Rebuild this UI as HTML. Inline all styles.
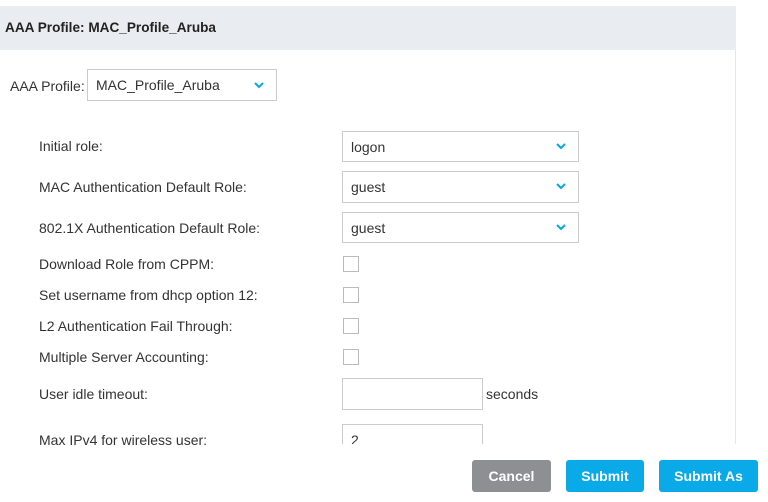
<!DOCTYPE html>
<html><head><style>
*{margin:0;padding:0;box-sizing:border-box}
body{width:768px;height:502px;background:#fff;font-family:"Liberation Sans",sans-serif;color:#333;position:relative;overflow:hidden;font-size:14px}
.a{position:absolute}
.hdr{left:0;top:6px;width:736px;height:44px;background:#e9ecf0;font-weight:bold;font-size:13.6px;color:#222;padding:14px 0 0 5px}
.vl{left:735px;top:50px;width:1px;height:394px;background:#e6e6e6}
.lbl{left:39px;line-height:16px}
.sel{border:1px solid #ccc;background:#fff;padding-left:8px;line-height:30px}
.sel svg{position:absolute;right:12px;top:11px}
.cb{left:343px;width:16px;height:16px;border:1px solid #bbb;background:#fff}
.btn{top:460px;height:32px;border-radius:3px;color:#fff;font-weight:bold;font-size:14px;text-align:center;line-height:32px}
</style></head><body>
<div class="a hdr">AAA Profile: MAC_Profile_Aruba</div>
<div class="a vl"></div>
<div class="a" style="left:10px;top:78px">AAA Profile:</div>
<div class="a sel" style="left:87px;top:69px;width:190px;height:32px;line-height:30px">MAC_Profile_Aruba<svg width="10" height="7" viewBox="0 0 10 7" style="top:12px"><path d="M1 1l4 4 4-4" fill="none" stroke="#0aa5e6" stroke-width="2"/></svg></div>

<div class="a lbl" style="top:138px">Initial role:</div>
<div class="a lbl" style="top:179px">MAC Authentication Default Role:</div>
<div class="a lbl" style="top:220px">802.1X Authentication Default Role:</div>
<div class="a lbl" style="top:256px">Download Role from CPPM:</div>
<div class="a lbl" style="top:287px">Set username from dhcp option 12:</div>
<div class="a lbl" style="top:318px">L2 Authentication Fail Through:</div>
<div class="a lbl" style="top:349px">Multiple Server Accounting:</div>
<div class="a lbl" style="top:386px">User idle timeout:</div>
<div class="a lbl" style="top:432px">Max IPv4 for wireless user:</div>

<div class="a sel" style="left:342px;top:131px;width:237px;height:31px">logon<svg width="10" height="7" viewBox="0 0 10 7"><path d="M1 1l4 4 4-4" fill="none" stroke="#0aa5e6" stroke-width="2"/></svg></div>
<div class="a sel" style="left:342px;top:171px;width:237px;height:32px">guest<svg width="10" height="7" viewBox="0 0 10 7"><path d="M1 1l4 4 4-4" fill="none" stroke="#0aa5e6" stroke-width="2"/></svg></div>
<div class="a sel" style="left:342px;top:212px;width:237px;height:31px">guest<svg width="10" height="7" viewBox="0 0 10 7"><path d="M1 1l4 4 4-4" fill="none" stroke="#0aa5e6" stroke-width="2"/></svg></div>

<div class="a cb" style="top:256px"></div>
<div class="a cb" style="top:287px"></div>
<div class="a cb" style="top:318px"></div>
<div class="a cb" style="top:349px"></div>

<div class="a" style="left:342px;top:378px;width:141px;height:32px;border:1px solid #ccc"></div>
<div class="a" style="left:486px;top:386px">seconds</div>
<div class="a" style="left:342px;top:424px;width:141px;height:20px;border:1px solid #ccc;border-bottom:none;padding:7px 0 0 8px;line-height:16px;overflow:hidden">2</div>

<div class="a btn" style="left:472px;width:79px;background:#8e8f93">Cancel</div>
<div class="a btn" style="left:566px;width:78px;background:#0aa9e8">Submit</div>
<div class="a btn" style="left:659px;width:99px;background:#0aa9e8">Submit As</div>
</body></html>
